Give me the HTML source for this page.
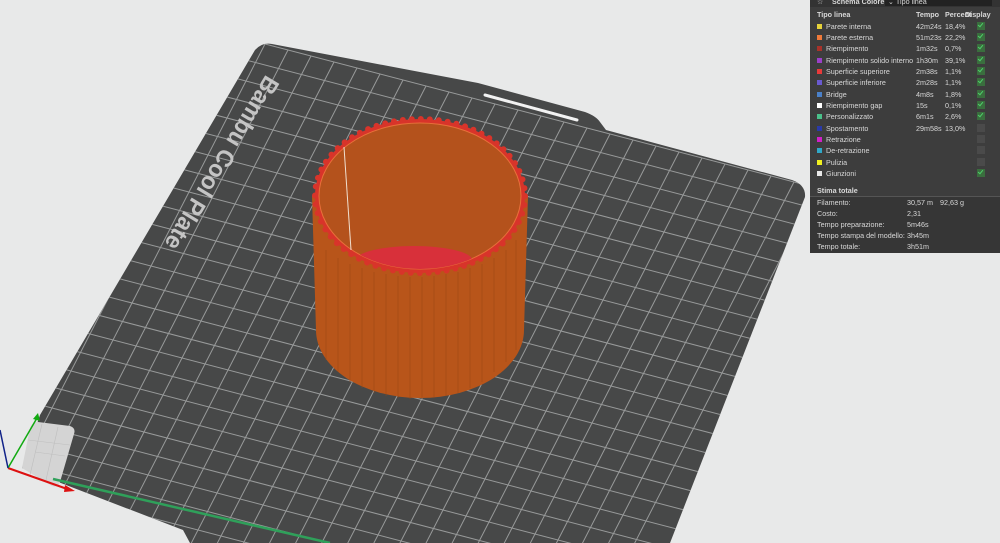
<!DOCTYPE html>
<html><head><meta charset="utf-8"><style>
html,body{margin:0;padding:0}
body{width:1000px;height:543px;overflow:hidden;background:#e8e9e9;position:relative;font-family:"Liberation Sans",sans-serif}
svg{overflow:hidden;display:block}
#p{position:absolute;left:810px;top:0;width:190px;height:253px;background:#3d3d3d;color:#d8d8d8;font-size:7.2px;overflow:hidden}
.r{position:absolute;left:0;height:11px;line-height:11px;width:190px}
.r span{position:absolute}
.sw{position:absolute;left:7px;top:3px;width:5px;height:5px}
.cb{position:absolute;left:167px;top:1px;width:8px;height:8px;background:#4a4a4a}
.cb.on{background:#3a6e3e}
.cb.on:after{content:"";position:absolute;left:2px;top:0px;width:2px;height:4px;border:solid #4fd06a;border-width:0 1.3px 1.3px 0;transform:rotate(40deg)}
</style></head><body>
<svg width="1000" height="543" viewBox="0 0 1000 543" style="position:absolute;left:0;top:0">
<defs>
<clipPath id="pc"><path d="M255 50 Q262 42 272 44 L478 83 L585 112 Q596 116 600 122 L606 130 L792 180 Q806 185 805 197 L670 543 L190 543 L183 530 L22 468 L40 415 Z"/></clipPath>
<clipPath id="ic"><ellipse cx="420" cy="196" rx="101" ry="73"/></clipPath>
</defs>
<path d="M255 50 Q262 42 272 44 L478 83 L585 112 Q596 116 600 122 L606 130 L792 180 Q806 185 805 197 L670 543 L190 543 L183 530 L22 468 L40 415 Z" fill="#474848"/>
<g clip-path="url(#pc)" stroke="#989a9a" stroke-width="1" fill="none">
<path d="M196 26L-89 581M219 32L-66 587M242 38L-43 593M265 44L-20 599M288 50L3 605M311 56L26 611M334 62L49 617M357 68L72 623M380 74L95 629M403 80L118 635M426 86L141 641M449 92L164 647M472 98L187 653M495 104L210 659M518 110L233 665M541 116L256 671M564 122L279 677M587 128L302 683M610 134L325 689M633 140L348 695M656 146L371 701M679 152L394 707M702 158L417 713M725 164L440 719M748 170L463 725M771 176L486 731M794 182L509 737M817 188L532 743"/>
<path d="M219 32L955 224M209.5 50.5L945.5 242.5M200 69L936 261M190.5 87.5L926.5 279.5M181 106L917 298M171.5 124.5L907.5 316.5M162 143L898 335M152.5 161.5L888.5 353.5M143 180L879 372M133.5 198.5L869.5 390.5M124 217L860 409M114.5 235.5L850.5 427.5M105 254L841 446M95.5 272.5L831.5 464.5M86 291L822 483M76.5 309.5L812.5 501.5M67 328L803 520M57.5 346.5L793.5 538.5M48 365L784 557M38.5 383.5L774.5 575.5M29 402L765 594M19.5 420.5L755.5 612.5M10 439L746 631M0.5 457.5L736.5 649.5M-9 476L727 668M-18.5 494.5L717.5 686.5M-28 513L708 705M-37.5 531.5L698.5 723.5"/>
</g>
<line x1="485" y1="95" x2="577" y2="120" stroke="#f2f2f2" stroke-width="3" stroke-linecap="round"/>
<path d="M22 468 L30 428 Q32 422 38 422 L70 426 Q76 428 74 434 L60 482 Q58 488 52 486 Z" fill="#d4d4d4"/>
<path d="M35 452 L65 456 M28 440 L70 445 M42 424 L30 475 M58 427 L46 480" stroke="#bfbfbf" stroke-width="0.6"/>
<line x1="53" y1="479" x2="330" y2="543" stroke="#2fa05a" stroke-width="2.5"/>
<line x1="8" y1="468" x2="70" y2="490" stroke="#d11" stroke-width="2"/>
<path d="M65 485 L75 491 L64 492Z" fill="#d11"/>
<line x1="8" y1="468" x2="37" y2="418" stroke="#1a1" stroke-width="1.5"/>
<path d="M33 419 L38 413 L40 421Z" fill="#1a1"/>
<line x1="8" y1="468" x2="0" y2="430" stroke="#128" stroke-width="1.5"/>
<text transform="translate(266,74) rotate(121)" font-family="Liberation Sans,sans-serif" font-size="24" font-weight="bold" fill="#c4c4c4" textLength="198" lengthAdjust="spacingAndGlyphs">Bambu Cool Plate</text>
<path d="M312 196 L316 330 A104 68 0 0 0 524 330 L528 196 Z" fill="#b8551a"/>
<g stroke="#9a4512" stroke-width="0.8" opacity="0.6">
<path d="M326 250V360M338 258V372M350 264V382M362 268V388M374 272V393M386 274V396M398 276V398M410 277V399M422 277V399M434 276V398M446 274V396M458 272V393M470 268V388M482 264V382M494 258V372M506 250V362M516 240V350"/>
</g>
<ellipse cx="420" cy="196" rx="105" ry="77" fill="#d8342a" stroke="#d8342a" stroke-width="6" stroke-dasharray="0 9" stroke-linecap="round"/>
<ellipse cx="420" cy="196" rx="101" ry="73" fill="#b4521c" stroke="#e8703a" stroke-width="1"/>
<g clip-path="url(#ic)">
<ellipse cx="414" cy="260" rx="58" ry="14" fill="#d8303a"/>
</g>
<line x1="344" y1="147" x2="351" y2="250" stroke="#f0e0d0" stroke-width="1"/>
</svg>
<div id="p">
<div class="r" style="top:-4px;background:#333"><span style="left:7px">☆</span><span style="left:22px;font-weight:bold">Schema Colore</span><span style="left:75px;width:104px;height:10px;background:#222;padding-left:3px">⌄ Tipo linea</span></div>
<div class="r" style="top:9px;font-weight:bold"><span style="left:7px">Tipo linea</span><span style="left:106px">Tempo</span><span style="left:135px">Percent</span><span style="left:155px">Display</span></div>
<div class="r" style="top:21px"><i class="sw" style="background:#e6d23a"></i><span style="left:16px">Parete interna</span><span style="left:106px">42m24s</span><span style="left:135px">18,4%</span><i class="cb on"></i></div>
<div class="r" style="top:32px"><i class="sw" style="background:#ef7a3a"></i><span style="left:16px">Parete esterna</span><span style="left:106px">51m23s</span><span style="left:135px">22,2%</span><i class="cb on"></i></div>
<div class="r" style="top:43px"><i class="sw" style="background:#a8322a"></i><span style="left:16px">Riempimento</span><span style="left:106px">1m32s</span><span style="left:135px">0,7%</span><i class="cb on"></i></div>
<div class="r" style="top:55px"><i class="sw" style="background:#9a40c8"></i><span style="left:16px">Riempimento solido interno</span><span style="left:106px">1h30m</span><span style="left:135px">39,1%</span><i class="cb on"></i></div>
<div class="r" style="top:66px"><i class="sw" style="background:#e83a3a"></i><span style="left:16px">Superficie superiore</span><span style="left:106px">2m38s</span><span style="left:135px">1,1%</span><i class="cb on"></i></div>
<div class="r" style="top:77px"><i class="sw" style="background:#6a5ad0"></i><span style="left:16px">Superficie inferiore</span><span style="left:106px">2m28s</span><span style="left:135px">1,1%</span><i class="cb on"></i></div>
<div class="r" style="top:89px"><i class="sw" style="background:#4a80c8"></i><span style="left:16px">Bridge</span><span style="left:106px">4m8s</span><span style="left:135px">1,8%</span><i class="cb on"></i></div>
<div class="r" style="top:100px"><i class="sw" style="background:#fff"></i><span style="left:16px">Riempimento gap</span><span style="left:106px">15s</span><span style="left:135px">0,1%</span><i class="cb on"></i></div>
<div class="r" style="top:111px"><i class="sw" style="background:#4ac08a"></i><span style="left:16px">Personalizzato</span><span style="left:106px">6m1s</span><span style="left:135px">2,6%</span><i class="cb on"></i></div>
<div class="r" style="top:123px"><i class="sw" style="background:#2a3aa8"></i><span style="left:16px">Spostamento</span><span style="left:106px">29m58s</span><span style="left:135px">13,0%</span><i class="cb"></i></div>
<div class="r" style="top:134px"><i class="sw" style="background:#d020c8"></i><span style="left:16px">Retrazione</span><i class="cb"></i></div>
<div class="r" style="top:145px"><i class="sw" style="background:#30a8c8"></i><span style="left:16px">De-retrazione</span><i class="cb"></i></div>
<div class="r" style="top:157px"><i class="sw" style="background:#f0f020"></i><span style="left:16px">Pulizia</span><i class="cb"></i></div>
<div class="r" style="top:168px"><i class="sw" style="background:#e8e8e8"></i><span style="left:16px">Giunzioni</span><i class="cb on"></i></div>
<div class="r" style="top:185px;font-weight:bold"><span style="left:7px">Stima totale</span></div>
<div style="position:absolute;left:0;top:196px;width:190px;height:57px;background:#363636;border-top:1px solid #555"></div>
<div class="r" style="top:197px"><span style="left:7px">Filamento:</span><span style="left:97px">30,57 m</span><span style="left:130px">92,63 g</span></div>
<div class="r" style="top:208px"><span style="left:7px">Costo:</span><span style="left:97px">2,31</span></div>
<div class="r" style="top:219px"><span style="left:7px">Tempo preparazione:</span><span style="left:97px">5m46s</span></div>
<div class="r" style="top:230px"><span style="left:7px">Tempo stampa del modello:</span><span style="left:97px">3h45m</span></div>
<div class="r" style="top:241px"><span style="left:7px">Tempo totale:</span><span style="left:97px">3h51m</span></div>
</div>
</body></html>
